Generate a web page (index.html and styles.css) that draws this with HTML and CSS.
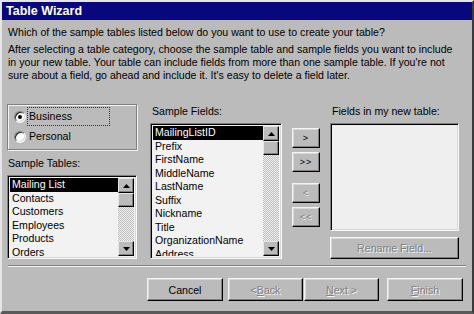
FILE: index.html
```html
<!DOCTYPE html>
<html>
<head>
<meta charset="utf-8">
<link rel="stylesheet" href="styles.css">
</head>
<body>
<div class="window">
  <div class="titlebar">Table Wizard</div>
  <p class="question">Which of the sample tables listed below do you want to use to create your table?</p>
  <p class="desc">After selecting a table category, choose the sample table and sample fields you want to include<br>in your new table. Your table can include fields from more than one sample table. If you're not<br>sure about a field, go ahead and include it. It's easy to delete a field later.</p>
  <div class="main">
    <div class="col col-left">
      <div class="group">
        <div class="radio-row">
          <span class="radio checked"></span>
          <span class="radio-label focus">Business</span>
        </div>
        <div class="radio-row">
          <span class="radio"></span>
          <span class="radio-label">Personal</span>
        </div>
      </div>
      <div class="label tables-label">Sample Tables:</div>
      <div class="listbox tables-list">
        <div class="items">
          <div class="item selected">Mailing List</div>
          <div class="item">Contacts</div>
          <div class="item">Customers</div>
          <div class="item">Employees</div>
          <div class="item">Products</div>
          <div class="item">Orders</div>
        </div>
        <div class="scrollbar">
          <div class="sb-btn"><svg width="7" height="4" viewBox="0 0 7 4"><polygon points="3.5,0 7,4 0,4" fill="#000"/></svg></div>
          <div class="sb-thumb"></div>
          <div class="sb-track"></div>
          <div class="sb-btn"><svg width="7" height="4" viewBox="0 0 7 4"><polygon points="0,0 7,0 3.5,4" fill="#000"/></svg></div>
        </div>
      </div>
    </div>
    <div class="col col-mid">
      <div class="label">Sample Fields:</div>
      <div class="listbox fields-list">
        <div class="items">
          <div class="item selected">MailingListID</div>
          <div class="item">Prefix</div>
          <div class="item">FirstName</div>
          <div class="item">MiddleName</div>
          <div class="item">LastName</div>
          <div class="item">Suffix</div>
          <div class="item">Nickname</div>
          <div class="item">Title</div>
          <div class="item">OrganizationName</div>
          <div class="item">Address</div>
        </div>
        <div class="scrollbar">
          <div class="sb-btn"><svg width="7" height="4" viewBox="0 0 7 4"><polygon points="3.5,0 7,4 0,4" fill="#000"/></svg></div>
          <div class="sb-thumb"></div>
          <div class="sb-track"></div>
          <div class="sb-btn"><svg width="7" height="4" viewBox="0 0 7 4"><polygon points="0,0 7,0 3.5,4" fill="#000"/></svg></div>
        </div>
      </div>
    </div>
    <div class="col col-arrows">
      <div class="btn arrow">&gt;</div>
      <div class="btn arrow second">&gt;&gt;</div>
      <div class="btn arrow disabled third">&lt;</div>
      <div class="btn arrow disabled second">&lt;&lt;</div>
    </div>
    <div class="col col-right">
      <div class="label">Fields in my new table:</div>
      <div class="listbox new-list"></div>
      <div class="btn disabled rename">Rename Field...</div>
    </div>
  </div>
  <div class="separator"></div>
  <div class="footer">
    <div class="btn wide">Cancel</div>
    <div class="btn wide disabled back">&lt; <u>B</u>ack</div>
    <div class="btn wide disabled next"><u>N</u>ext &gt;</div>
    <div class="btn wide disabled finish"><u>F</u>inish</div>
  </div>
</div>
</body>
</html>
```

FILE: styles.css
```css
html, body {
  margin: 0;
  padding: 0;
  background: #bbbbbb;
}

.window {
  width: 474px;
  height: 314px;
  box-sizing: border-box;
  background: #bbbbbb;
  border-style: solid;
  border-width: 2px 2px 3px 2px;
  border-color: #e6e6e6 #3a3a3a #5a5a5a #e6e6e6;
  font-family: "Liberation Sans", Arial, sans-serif;
  font-size: 10.6px;
  color: #000;
  overflow: hidden;
}

.titlebar {
  height: 18px;
  line-height: 18px;
  background: #08087c;
  color: #fff;
  font-weight: bold;
  font-size: 12.5px;
  padding-left: 4px;
}

.question {
  margin: 6px 0 0 6px;
  line-height: 13px;
  white-space: nowrap;
}

.desc {
  margin: 4px 0 0 6px;
  line-height: 13px;
  white-space: nowrap;
}

.main {
  display: flex;
  margin-top: 22px;
  padding-left: 5px;
  height: 157px;
}

.col {
  display: flex;
  flex-direction: column;
}

.col-left {
  width: 130px;
}

.col-mid {
  width: 132px;
  margin-left: 13px;
}

.col-arrows {
  width: 28px;
  margin-left: 10px;
  padding-top: 24px;
}

.col-right {
  width: 129px;
  margin-left: 10px;
}

.label {
  line-height: 13px;
  height: 13px;
  margin-top: 1px;
  padding-left: 2px;
  white-space: nowrap;
}

.tables-label {
  margin-top: 7px;
  padding-left: 1px;
}

/* group box */
.group {
  box-sizing: border-box;
  height: 46px;
  border: 1px solid #808080;
  box-shadow: inset 1px 1px #f4f4f4, 1px 1px #f4f4f4;
  padding: 2px 0 0 6px;
  display: flex;
  flex-direction: column;
  gap: 1px;
}

.radio-row {
  display: flex;
  align-items: center;
  height: 19px;
}

.radio {
  width: 12px;
  height: 12px;
  box-sizing: border-box;
  border-radius: 50%;
  border: 1px solid;
  border-color: #808080 #f4f4f4 #f4f4f4 #808080;
  background: #fff;
  box-shadow: inset 1px 1px #202020, inset -1px -1px #d8d8d8;
  display: flex;
  align-items: center;
  justify-content: center;
}

.radio.checked::after {
  content: "";
  width: 4px;
  height: 4px;
  border-radius: 50%;
  background: #000;
}

.radio-label {
  box-sizing: border-box;
  margin-left: 1px;
  width: 83px;
  height: 19px;
  line-height: 17px;
  padding-left: 1px;
  border: 1px dotted transparent;
}

.radio-label.focus {
  border-color: #333;
}

/* listbox */
.listbox {
  box-sizing: border-box;
  display: flex;
  background: #f2f2f2;
  border: 1px solid;
  border-color: #808080 #f8f8f8 #f8f8f8 #808080;
  box-shadow: inset 1px 1px #000, inset -1px -1px #d8d8d8;
  padding: 2px 2px 2px 2px;
  overflow: hidden;
}

.tables-list {
  margin-top: 5px;
  height: 84px;
}

.fields-list {
  margin-top: 5px;
  height: 136px;
}

.new-list {
  margin-top: 5px;
  height: 108px;
  background: #efefef;
}

.items {
  flex: 1;
  overflow: hidden;
}

.item {
  height: 13.5px;
  line-height: 13.5px;
  padding-left: 2px;
  white-space: nowrap;
}

.item.selected {
  background: #000;
  color: #fff;
}

.scrollbar {
  width: 16px;
  display: flex;
  flex-direction: column;
}

.sb-btn, .sb-thumb {
  box-sizing: border-box;
  width: 16px;
  height: 15px;
  flex: none;
  background: #bbbbbb;
  border: 1px solid;
  border-color: #e6e6e6 #000 #000 #e6e6e6;
  box-shadow: inset -1px -1px #808080;
  display: flex;
  align-items: center;
  justify-content: center;
}

.sb-thumb {
  height: 14px;
}

.sb-track {
  flex: 1;
  background-color: #efefef;
  background-image: repeating-conic-gradient(#bdbdbd 0 25%, #f0f0f0 0 50%);
  background-size: 2px 2px;
}

/* buttons */
.btn {
  box-sizing: border-box;
  display: flex;
  align-items: center;
  justify-content: center;
  background: #bbbbbb;
  border: 1px solid;
  border-color: #f4f4f4 #000 #000 #f4f4f4;
  box-shadow: inset -1px -1px #808080, inset 1px 1px #d8d8d8;
  white-space: nowrap;
}

.btn.disabled {
  color: #808080;
  text-shadow: 1px 1px #f4f4f4;
}

.arrow {
  width: 28px;
  height: 20px;
  font-size: 9px;
  letter-spacing: 1px;
}

.arrow.second {
  margin-top: 4px;
}

.arrow.third {
  margin-top: 11px;
}

.rename {
  margin-top: 6px;
  height: 22px;
}

.separator {
  margin: 4px 6px 0 6px;
  height: 0;
  border-top: 1px solid #808080;
  border-bottom: 1px solid #f4f4f4;
}

.footer {
  display: flex;
  justify-content: flex-end;
  margin-top: 11px;
  padding-right: 9px;
}

.wide {
  width: 76px;
  height: 23px;
}

.back {
  margin-left: 5px;
  width: 75px;
}

.next {
  margin-left: 1px;
  width: 75px;
}

.finish {
  margin-left: 8px;
}
```
